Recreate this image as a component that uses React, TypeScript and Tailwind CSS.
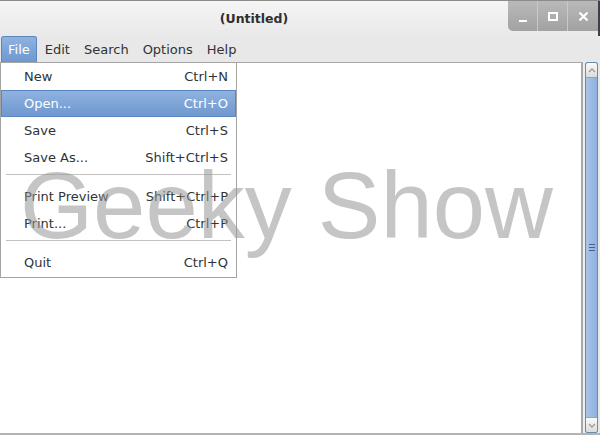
import React from "react";

const menuItems: ({ label: string; key: string; active?: boolean } | null)[] = [
  { label: "New", key: "Ctrl+N" },
  { label: "Open...", key: "Ctrl+O", active: true },
  { label: "Save", key: "Ctrl+S" },
  { label: "Save As...", key: "Shift+Ctrl+S" },
  null,
  { label: "Print Preview", key: "Shift+Ctrl+P" },
  { label: "Print...", key: "Ctrl+P" },
  null,
  { label: "Quit", key: "Ctrl+Q" },
];

function WindowButtons() {
  return (
    <div className="flex h-[30px] w-[90px] self-start overflow-hidden rounded-bl-[5px] bg-gradient-to-b from-[#b9b9b9] to-[#a2a2a2]">
      {/* Minimize */}
      <div className="flex w-[30px] items-end justify-center border-r border-[#c9c9c9] pb-[9px]">
        <div className="h-[2px] w-[8px] bg-white"></div>
      </div>
      {/* Maximize */}
      <div className="flex w-[30px] items-center justify-center border-r border-[#c9c9c9]">
        <div className="h-[9px] w-[10px] border-2 border-white"></div>
      </div>
      {/* Close */}
      <div className="flex w-[30px] items-center justify-center">
        <svg width="11" height="11" viewBox="0 0 11 11">
          <path d="M1.5 1.5 L9.5 9.5 M9.5 1.5 L1.5 9.5" stroke="white" strokeWidth="2.2" />
        </svg>
      </div>
    </div>
  );
}

function Scrollbar() {
  return (
    <div className="flex w-[16px] flex-col border-l border-[#a8a8a8] bg-[#eeeeee] pl-[2px]">
      <div className="flex flex-1 flex-col rounded-[2px] border border-[#6f88ad] bg-[#9cbbe6]">
        {/* Up arrow */}
        <div className="flex h-[15px] items-center justify-center rounded-t-[2px] border-b border-[#8ca4c8] bg-gradient-to-b from-[#fafafa] to-[#dcdcdc]">
          <svg width="8" height="5" viewBox="0 0 8 5">
            <path d="M1 4 L4 1 L7 4" stroke="#9a9a9a" strokeWidth="1.3" fill="none" />
          </svg>
        </div>
        <div className="flex flex-1 items-center justify-center bg-gradient-to-r from-[#a9c4ea] to-[#8fb1e0]">
          <div className="flex flex-col gap-[2px]">
            <div className="h-px w-[6px] bg-[#47628a]"></div>
            <div className="h-px w-[6px] bg-[#47628a]"></div>
            <div className="h-px w-[6px] bg-[#47628a]"></div>
          </div>
        </div>
        {/* Down arrow */}
        <div className="flex h-[15px] items-center justify-center rounded-b-[2px] border-t border-[#8ca4c8] bg-gradient-to-b from-[#fafafa] to-[#dcdcdc]">
          <svg width="8" height="5" viewBox="0 0 8 5">
            <path d="M1 1 L4 4 L7 1" stroke="#9a9a9a" strokeWidth="1.3" fill="none" />
          </svg>
        </div>
      </div>
    </div>
  );
}

export default function App() {
  return (
    <div className="relative flex h-[435px] w-[600px] flex-col overflow-hidden bg-[#e8e8e8] font-['DejaVu_Sans',sans-serif] text-[13px] text-[#2e3436]">
      {/* Title bar */}
      <div className="flex h-[36px] border-t border-[#8c8c8c] bg-gradient-to-b from-[#f5f5f5] to-[#e9e9e9]">
        <div className="flex flex-1 items-center justify-center pt-[2px] text-[12.5px] font-bold text-[#2e2e2e]">
          (Untitled)
        </div>
        <WindowButtons />
        <div className="w-[2px] bg-[#3a3f55]"></div>
      </div>

      {/* Menu bar */}
      <div className="flex h-[26px] items-stretch">
        <div className="ml-px flex items-center rounded-t-[3px] border border-b-0 border-[#5c86c0] bg-gradient-to-b from-[#8fb2e0] to-[#6e98cf] px-[6px] pt-px text-white">
          File
        </div>
        <div className="flex items-center pl-[8px] pr-[7px] pt-px">Edit</div>
        <div className="flex items-center px-[7px] pt-px">Search</div>
        <div className="flex items-center px-[7px] pt-px">Options</div>
        <div className="flex items-center px-[7px] pt-px">Help</div>
      </div>

      {/* Editor area */}
      <div className="flex flex-1 border-b-2 border-[#b4b4b4] pr-[2px]">
        <div className="flex-1 border-t border-r border-[#a8a8a8] bg-white"></div>
        <Scrollbar />
      </div>

      {/* File menu */}
      <div className="absolute left-0 top-[62px] flex w-[237px] flex-col border border-[#a4a4a4] bg-white pb-px">
        {menuItems.map((item, index) =>
          item === null ? (
            <div key={index} className="h-[12px] px-[5px] pt-[3px]">
              <div className="h-px w-full bg-[#c2c2c2]"></div>
            </div>
          ) : (
            <div
              key={index}
              className={
                item.active
                  ? "flex h-[27px] items-center justify-between border border-[#5c86c0] bg-gradient-to-b from-[#8fb2e0] to-[#6f98cf] pl-[22px] pr-[7px] text-white"
                  : "flex h-[27px] items-center justify-between pl-[23px] pr-[8px]"
              }
            >
              <span>{item.label}</span>
              <span>{item.key}</span>
            </div>
          )
        )}
      </div>

      {/* Watermark */}
      <div className="pointer-events-none absolute left-[20px] top-[159px] whitespace-nowrap font-['Liberation_Sans',sans-serif] text-[94px] leading-none text-[rgba(150,150,150,0.55)]">
        Geeky Show
      </div>
    </div>
  );
}
